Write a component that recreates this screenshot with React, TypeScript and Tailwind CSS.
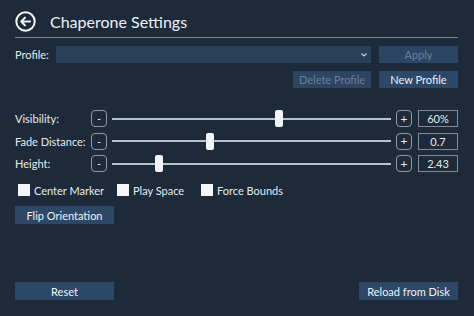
import React from "react";

const font = { fontFamily: "Lato, 'Open Sans', sans-serif" };

function Slider({ label, value, pct }: { label: string; value: string; pct: number }) {
  return (
    <div className="flex items-center h-[17px]">
      <div className="w-[76px] whitespace-nowrap text-[11px] text-[#e6eaee] leading-none">{label}</div>
      <div className="w-[16px] h-[17px] border border-[#8c99a7] rounded-[4px] flex items-center justify-center text-[#e6eaee] text-[11px] leading-none">-</div>
      <div className="flex-1 mx-[5px] relative h-[17px] flex items-center">
        <div className="w-full h-[2px] bg-[#b9c1ca]" />
        <div
          className="absolute top-0 w-[8px] h-[17px] bg-[#f2f4f6] rounded-[2px]"
          style={{ left: `calc(${pct * 100}% - 4px)` }}
        />
      </div>
      <div className="w-[16px] h-[17px] border border-[#8c99a7] rounded-[4px] flex items-center justify-center text-[#e6eaee] text-[12px] leading-none">+</div>
      <div className="ml-[6px] w-[40px] h-[17px] border border-[#7f8b98] flex items-center justify-center text-[#e6eaee] text-[11px] leading-none">{value}</div>
    </div>
  );
}

function Check({ label }: { label: string }) {
  return (
    <div className="flex items-center">
      <div className="w-[12px] h-[12px] bg-[#f4f6f8]" />
      <span className="ml-[4px] text-[11px] text-[#e6eaee] leading-none">{label}</span>
    </div>
  );
}

export default function App() {
  return (
    <div className="w-[474px] h-[316px] bg-[#1c2a3a] flex flex-col pl-[15px] pr-[16px]" style={font}>
      <div className="flex items-center h-[38px] pt-[6px] border-b border-[#7d8894]">
        <svg width="21" height="21" viewBox="0 0 21 21" className="shrink-0">
          <circle cx="10.5" cy="10.5" r="9.2" fill="none" stroke="#f2f4f6" strokeWidth="2" />
          <path d="M15 10.5H6.5M10 6.6L6.2 10.5L10 14.4" fill="none" stroke="#f2f4f6" strokeWidth="2" strokeLinecap="round" strokeLinejoin="round" />
        </svg>
        <div className="ml-[14px] text-[16px] text-[#eef1f4] leading-none">Chaperone Settings</div>
      </div>

      <div className="flex items-center mt-[8px] h-[17px]">
        <div className="w-[41px] text-[11px] text-[#e6eaee] leading-none">Profile:</div>
        <div className="flex-1 h-[17px] bg-[#29405a] flex items-center justify-end pr-[4px]">
          <svg width="6" height="4" viewBox="0 0 6 4">
            <path d="M0.5 0.5L3 3L5.5 0.5" fill="none" stroke="#c8d0d8" strokeWidth="1.2" />
          </svg>
        </div>
        <div className="ml-[8px] w-[79px] h-[17px] bg-[#2b4562] flex items-center justify-center text-[11px] text-[#6c8096] leading-none">Apply</div>
      </div>

      <div className="flex justify-end mt-[8px] gap-[8px]">
        <div className="w-[78px] h-[17px] bg-[#2b4562] flex items-center justify-center text-[11px] text-[#6c8096] leading-none">Delete Profile</div>
        <div className="w-[79px] h-[17px] bg-[#2d4866] flex items-center justify-center text-[11px] text-[#eef1f4] leading-none">New Profile</div>
      </div>

      <div className="flex flex-col gap-[5.5px] mt-[22px]">
        <Slider label="Visibility:" value="60%" pct={0.6} />
        <Slider label="Fade Distance:" value="0.7" pct={0.35} />
        <Slider label="Height:" value="2.43" pct={0.17} />
      </div>

      <div className="flex items-center mt-[12px] pl-[3px]">
        <div className="w-[99px]"><Check label="Center Marker" /></div>
        <div className="w-[84px]"><Check label="Play Space" /></div>
        <Check label="Force Bounds" />
      </div>

      <div className="mt-[10px] w-[99px] h-[18px] bg-[#2d4866] flex items-center justify-center text-[11px] text-[#eef1f4] leading-none">Flip Orientation</div>

      <div className="mt-auto mb-[16px] flex justify-between">
        <div className="w-[99px] h-[18px] bg-[#2d4866] flex items-center justify-center text-[11px] text-[#eef1f4] leading-none">Reset</div>
        <div className="w-[99px] h-[18px] bg-[#2d4866] flex items-center justify-center text-[11px] text-[#eef1f4] leading-none">Reload from Disk</div>
      </div>
    </div>
  );
}
